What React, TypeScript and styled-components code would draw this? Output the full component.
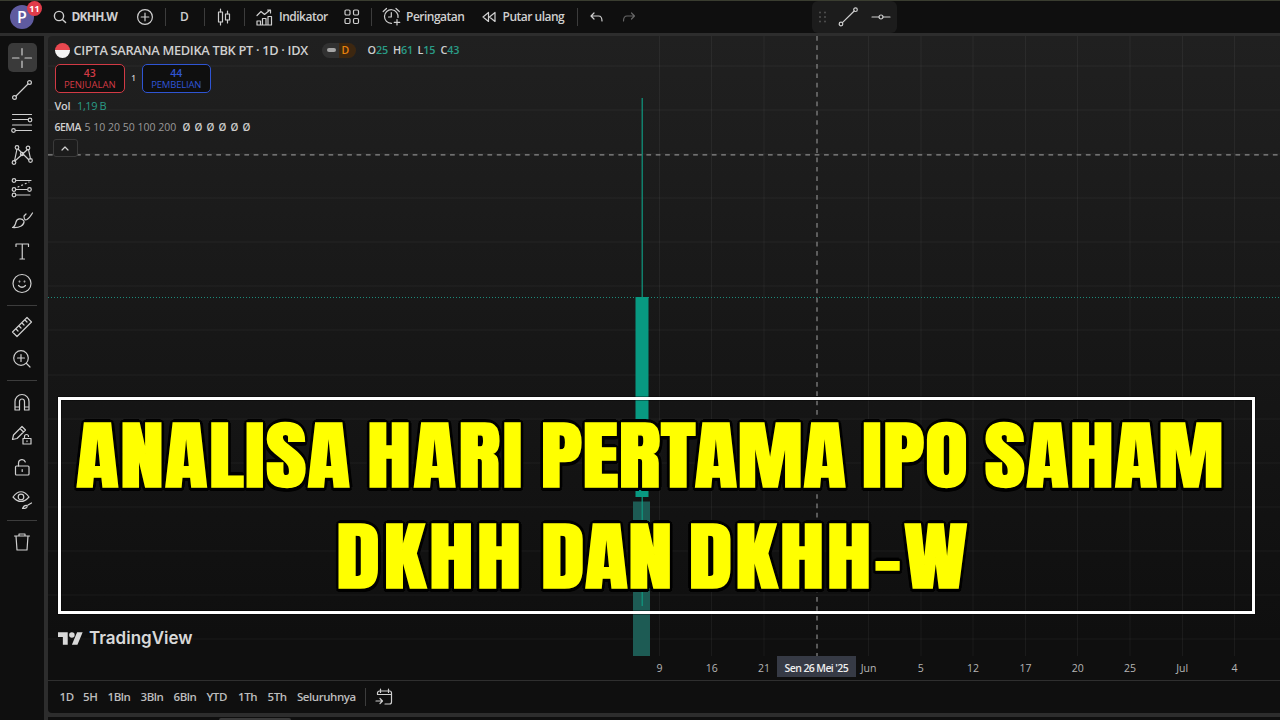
import React from 'react';
import styled, { createGlobalStyle } from 'styled-components';

const Global = createGlobalStyle`
  * { box-sizing: border-box; }
  html, body { margin: 0; background: #0f0f0f; overflow: hidden; }
  body { font-family: "Open Sans", "Noto Sans", sans-serif; color: #cfcfcf; }
`;

const Page = styled.div`
  position: relative;
  width: 1280px;
  height: 720px;
  display: grid;
  grid-template-rows: 33px 1fr;
  row-gap: 3px;
  background: #2d2d2d;
  overflow: hidden;
`;

const TopBar = styled.header`
  display: flex;
  align-items: center;
  background: #0f0f0f;
  border-top: 1px solid #3a3d30;
`;

const Slot = styled.div<{ $w: number; $center?: boolean }>`
  flex: none;
  width: ${(p) => p.$w}px;
  display: flex;
  align-items: center;
  justify-content: ${(p) => (p.$center ? 'center' : 'flex-start')};
  svg { flex: none; display: block; }
`;

const Label = styled.span<{ $size?: number; $weight?: number; $color?: string; $ls?: number }>`
  font-size: ${(p) => p.$size ?? 12}px;
  font-weight: ${(p) => p.$weight ?? 600};
  letter-spacing: ${(p) => p.$ls ?? 0}px;
  color: ${(p) => p.$color ?? '#cfcfcf'};
  line-height: 16px;
  white-space: nowrap;
`;

const Divider = styled.i`
  flex: none;
  width: 1px;
  height: 18px;
  background: #3c3c3c;
`;

const Avatar = styled.div`
  position: relative;
  margin-left: 10px;
  width: 24px;
  height: 24px;
  border-radius: 50%;
  background: #5f5b9f;
  color: #fff;
  font-size: 16px;
  font-weight: 600;
  line-height: 24px;
  text-align: center;
`;

const Badge = styled.span`
  position: absolute;
  left: 17px;
  top: -4px;
  width: 15px;
  height: 15px;
  border-radius: 50%;
  background: #e03c4a;
  font-size: 9px;
  line-height: 15px;
  font-weight: 700;
`;

const Drawer = styled.div`
  display: flex;
  align-items: center;
  width: 85px;
  height: 32px;
  border-radius: 6px;
  background: #1c1c1c;
  padding-left: 6px;
`;

const Body = styled.div`
  display: grid;
  grid-template-columns: 44px 1fr;
  column-gap: 4px;
  min-height: 0;
`;

const Tools = styled.nav`
  display: flex;
  flex-direction: column;
  align-items: center;
  background: #0f0f0f;
  padding-top: 7px;
`;

const Tool = styled.div<{ $h: number; $active?: boolean }>`
  flex: none;
  width: 29px;
  height: ${(p) => p.$h}px;
  display: grid;
  place-items: center;
  border-radius: 5px;
  background: ${(p) => (p.$active ? '#3a3a3a' : 'transparent')};
  svg { display: block; overflow: visible; }
`;

const ToolRule = styled.i`
  flex: none;
  width: 30px;
  height: 1px;
  margin: 5px 0;
  background: #3c3c3c;
`;

const Main = styled.main`
  display: grid;
  grid-template-rows: 677px 3px;
  row-gap: 4px;
  min-width: 0;
`;

const ChartPanel = styled.section`
  position: relative;
  display: flex;
  flex-direction: column;
  border-radius: 4px 0 0 4px;
  background: linear-gradient(#202020 0, #1d1d1d 110px, #171717 300px, #121212 480px, #0f0f0f 600px);
`;

const Plot = styled.div`
  position: relative;
  height: 620px;
`;

const PlotSvg = styled.svg`
  position: absolute;
  inset: 0;
`;

const Legend = styled.div`
  position: relative;
  display: flex;
  flex-direction: column;
  align-items: flex-start;
  padding: 5px 0 0 6.5px;
`;

const LegendRow = styled.div<{ $h: number }>`
  display: flex;
  align-items: center;
  height: ${(p) => p.$h}px;
`;

const Flag = styled.i`
  width: 15px;
  height: 15px;
  margin-right: 4px;
  border-radius: 50%;
  background: linear-gradient(#e8474f 50%, #f4f4f4 50%);
`;

const Pill = styled.span`
  display: flex;
  align-items: center;
  width: 34px;
  height: 15px;
  border-radius: 8px;
  overflow: hidden;
  background: linear-gradient(90deg, #313131 50%, #3d2710 50%);
  i { width: 9px; height: 4px; margin: 0 6px 0 5px; border-radius: 2px; background: #a5a5a5; }
`;

const Trade = styled.div<{ $color: string; $w: number }>`
  display: flex;
  flex-direction: column;
  align-items: center;
  width: ${(p) => p.$w}px;
  height: 29px;
  padding-top: 2px;
  border: 1px solid ${(p) => p.$color};
  border-radius: 5px;
  background: #0f0f0f;
  span { line-height: 12px; color: ${(p) => p.$color}; }
`;

const Collapse = styled.div`
  display: grid;
  place-items: center;
  width: 25px;
  height: 18px;
  margin: 1px 0 0 -2px;
  border: 1px solid #3a3a3a;
  border-radius: 3px;
  background: #1c1c1c;
`;

const Brand = styled.div`
  position: absolute;
  left: 10px;
  top: 590px;
  display: flex;
  align-items: center;
  gap: 6px;
  height: 24px;
  font-family: Inter, sans-serif;
  font-size: 17px;
  font-weight: 600;
  color: #d9d9d9;
`;

const TimeAxis = styled.div`
  display: flex;
  height: 24px;
  padding-left: 585.4px;
`;

const Tick = styled.div`
  flex: none;
  display: flex;
  justify-content: center;
  align-items: center;
  width: 52.27px;
  height: 24px;
`;

const TickTag = styled.div`
  flex: none;
  display: flex;
  align-items: center;
  justify-content: center;
  width: 79px;
  height: 21px;
  margin-top: -3px;
  padding-top: 2px;
  background: #363a45;
`;

const Ranges = styled.footer`
  display: flex;
  align-items: center;
  height: 33px;
  border-top: 1px solid #2f2f2f;
  padding-left: 11.5px;
`;

const LowerPanel = styled.div`
  display: flex;
  align-items: flex-end;
  background: #0f0f0f;
  padding-left: 171px;
  i { width: 72px; height: 2px; border-radius: 2px 2px 0 0; background: #3a3a3a; }
`;

const Banner = styled.div`
  position: absolute;
  left: 58px;
  top: 397px;
  width: 1197px;
  height: 217px;
  display: flex;
  flex-direction: column;
  align-items: center;
  padding-top: 6px;
  border: 3px solid #fff;
  box-shadow: 0 0 0 1px rgba(0, 0, 0, 0.35), inset 0 0 0 1px rgba(0, 0, 0, 0.35);
`;

const Headline = styled.div<{ $mr: number; $sx: number }>`
  height: 101px;
  margin-right: ${(p) => p.$mr}px;
  line-height: 100px;
  font-family: Impact, Anton, "Roboto Condensed", Roboto, sans-serif;
  font-size: 74px;
  font-weight: 400;
  word-spacing: -4px;
  white-space: nowrap;
  color: #ffff00;
  transform: scaleX(${(p) => p.$sx});
  -webkit-text-stroke: 1.4px #ffff00;
  text-shadow: 3px 0 #000, -3px 0 #000, 0 4px #000, 0 -4px #000, 2.5px 2.5px #000, -2.5px 2.5px #000,
    2.5px -2.5px #000, -2.5px -2.5px #000, 1.5px 3.5px #000, -1.5px 3.5px #000,
    1.5px -3.5px #000, -1.5px -3.5px #000;
`;

const Word = styled.span<{ $ls: number }>`
  letter-spacing: ${(p) => p.$ls}px;
`;

const S = ({ w = 22, h = 22, children, c = '#cfcfcf', sw = 1.2 }: any) => (
  <svg width={w} height={h} viewBox={`0 0 ${w} ${h}`} fill="none" stroke={c} strokeWidth={sw} strokeLinecap="round" strokeLinejoin="round">
    {children}
  </svg>
);

const xs = [659.5, 711.5, 764, 868.5, 921, 973, 1025.5, 1077.5, 1130, 1182.5, 1234.5];
const ys = [66, 110, 154, 198, 242, 286, 330, 375, 419, 463, 507, 551, 595, 639];
const ticks = ['9', '16', '21', '*', 'Jun', '5', '12', '17', '20', '25', 'Jul', '4'];
const ranges: [string, number][] = [['1D', 23.5], ['5H', 24.5], ['1Bln', 33], ['3Bln', 33], ['6Bln', 33], ['YTD', 31.5], ['1Th', 29.5], ['5Th', 29.5], ['Seluruhnya', 67.5]];

export default function App() {
  return (
    <Page>
      <Global />
      <TopBar>
        <Slot $w={53}><Avatar>P<Badge>11</Badge></Avatar></Slot>
        <Slot $w={18.5}><S w={14} h={14} sw={1.4}><circle cx="6" cy="6" r="4.6" /><path d="M9.4 9.4 12.6 12.6" /></S></Slot>
        <Slot $w={65}><Label $ls={-0.8} $weight={700}>DKHH.W</Label></Slot>
        <Slot $w={28}><S w={16} h={16}><circle cx="8" cy="8" r="7.4" /><path d="M8 4.2v7.6M4.2 8h7.6" /></S></Slot>
        <Divider />
        <Slot $w={38} $center><Label>D</Label></Slot>
        <Divider />
        <Slot $w={39} $center><S w={14} h={18}><path d="M3.5 1v3M3.5 14v3M10.5 3v3M10.5 12v3" /><rect x="1.5" y="4" width="4" height="10" /><rect x="8.5" y="6" width="4" height="6" /></S></Slot>
        <Divider />
        <Slot $w={34.5}><Slot $w={11.5} /><S w={17} h={17}><path d="M1 6.5 5 2.5 8.5 5.5 14 1M11.5 1H14.5V4M1 16v-4h3.5v4M6.5 16V9.5H10V16M12 16V7.5h3.5V16M1 16h14.5" /></S></Slot>
        <Slot $w={64.5}><Label $ls={-0.5}>Indikator</Label></Slot>
        <Slot $w={27}><S w={16} h={16}><rect x="1" y="1" width="5" height="5" rx="1.2" /><rect x="9.5" y="1" width="5" height="5" rx="1.2" /><rect x="1" y="9.5" width="5" height="5" rx="1.2" /><rect x="9.5" y="9.5" width="5" height="5" rx="1.2" /></S></Slot>
        <Divider />
        <Slot $w={34.5}><Slot $w={10} /><S w={20} h={20}><path d="M16 10.5A6.8 6.8 0 1 0 9.5 16.3M9.3 5.5V10H6.5M1.2 4.5 4.5 1.5M14 1.5l3.3 3M15 12.5v5.5M12.2 15.3h5.6" /></S></Slot>
        <Slot $w={75.5}><Label $ls={-0.5}>Peringatan</Label></Slot>
        <Slot $w={21}><S w={15} h={12}><path d="M6.5 1.5v9L1 6zM13 1.5v9L7.5 6z" /></S></Slot>
        <Slot $w={74}><Label $ls={-0.5}>Putar ulang</Label></Slot>
        <Divider />
        <Slot $w={44}><Slot $w={12} /><S w={14} h={10}><path d="M4 1 1 4 4 7M1 4h7.5Q12 4 12 9" /></S></Slot>
        <Slot $w={190}><S w={14} h={10} c="#666"><path d="M9.5 1l3 3-3 3M12.5 4H5Q1.5 4 1.5 9" /></S></Slot>
        <Drawer>
          <Slot $w={20}><S w={9} h={12} c="none"><g fill="#555"><circle cx="2" cy="1.5" r=".9" /><circle cx="7" cy="1.5" r=".9" /><circle cx="2" cy="6" r=".9" /><circle cx="7" cy="6" r=".9" /><circle cx="2" cy="10.5" r=".9" /><circle cx="7" cy="10.5" r=".9" /></g></S></Slot>
          <Slot $w={33}><S w={20} h={20}><circle cx="3" cy="17" r="1.8" /><circle cx="17.5" cy="2.7" r="1.8" /><path d="M4.4 15.6 16.2 4" /></S></Slot>
          <S w={20} h={10}><circle cx="10" cy="5" r="2" /><path d="M1 5h7M12 5h7" /></S>
        </Drawer>
      </TopBar>
      <Body>
        <Tools>
          <Tool $h={29} $active><S><path d="M11 1.5v6.5M11 14v6.5M1.5 11h6.5M14 11h6.5" /></S></Tool>
          <Tool $h={36}><S><circle cx="3.5" cy="18.5" r="1.9" /><circle cx="18.5" cy="3.5" r="1.9" /><path d="M5 17 17 5" /></S></Tool>
          <Tool $h={29}><S><path d="M1.5 2.5h19M1.5 7.5h15.5M4.5 18.5h16M1.5 13h19" /><circle cx="19" cy="8" r="1.8" /><circle cx="2.5" cy="18.5" r="1.8" /></S></Tool>
          <Tool $h={35}><S><path d="M3.5 17 6 5M7.5 5.5l10 10M16.5 5.5 4.5 16.5M17.5 5.5l2 9.5" /><circle cx="6" cy="3.5" r="1.8" /><circle cx="17" cy="4" r="1.8" /><circle cx="3" cy="18.5" r="1.8" /><circle cx="19.5" cy="16.5" r="1.8" /><circle cx="11" cy="10" r="1.6" /></S></Tool>
          <Tool $h={31}><S><path d="M5 3.5h15M5 12.5h11M5 18h14" /><path d="M7 10 18 5" strokeDasharray="1 3" /><circle cx="3" cy="3.5" r="1.8" /><circle cx="3" cy="12.5" r="1.8" /><circle cx="18.5" cy="12.5" r="1.8" /><circle cx="3" cy="18" r="1.8" /></S></Tool>
          <Tool $h={33}><S><path d="M1.5 18.5Q4 17.5 5 13C6 9 11 9 13 12C13.5 16 9 19 1.5 18.5ZM13 7Q13 12 16 10.5Q18.5 9 21.5 4M13 7 15 5" /></S></Tool>
          <Tool $h={31}><S><path d="M5 5.5V3H17.5V5.5M11.25 3V18M9 18h4.5" /></S></Tool>
          <Tool $h={33}><S><circle cx="11" cy="10.5" r="9" /><path d="M7.5 12.5Q11 16 14.5 12.5" /><circle cx="8.5" cy="8.5" r=".3" /><circle cx="13.5" cy="8.5" r=".3" /></S></Tool>
          <ToolRule />
          <Tool $h={31}><S><path d="M1.5 16 16 1.5 20.5 6 6 20.5ZM5 13l2 2M8 10l2 2M11 7l2 2M14 4l2 2" /></S></Tool>
          <Tool $h={33}><S><circle cx="10" cy="10" r="7.3" /><path d="M10 6.5v7M6.5 10h7M15.5 15.5 19 19" /></S></Tool>
          <ToolRule />
          <Tool $h={32}><S><path d="M4 19V10.5a7 7 0 0 1 14 0V19H13.5V10.5a2.5 2.5 0 0 0-5 0V19ZM4 16h4.5M13.5 16H18" /></S></Tool>
          <Tool $h={33}><S><path d="M1.5 15.5 2.5 11 11 2.5 14.5 6 6 14.5ZM9 4.5l3.5 3.5M12 14.5h8v5.5h-8zM13.5 14.5V12.5a2 2 0 0 1 4 0M16 16.8v.8" /></S></Tool>
          <Tool $h={33}><S><rect x="4.5" y="9" width="13.5" height="9" rx="1" /><path d="M7.5 9V6a3.5 3.5 0 0 1 6.8-1M11.2 12.5v2" /></S></Tool>
          <Tool $h={31}><S><path d="M2 8Q10 -2.5 18 8Q10 17 2 8Z" /><circle cx="10" cy="8" r="2.8" /><path d="M11.5 19.5Q13 16 16 16.5Q17 19.5 11.5 19.5ZM17 16 20.5 14" /></S></Tool>
          <ToolRule />
          <Tool $h={31}><S><path d="M3.5 5h15M8 5V3h6v2M5 5 6 19H16L17 5" /></S></Tool>
        </Tools>
        <Main>
          <ChartPanel>
            <Plot>
              <PlotSvg width="1232" height="620" viewBox="48 36 1232 620">
                <g stroke="#fff" strokeOpacity=".05">
                  {ys.map((y) => <path key={y} d={`M48 ${y}H1280`} />)}
                  {xs.map((x) => <path key={x} d={`M${x} 36V656`} />)}
                </g>
                <path d="M48 297.5H1280" stroke="#1d8a7a" strokeDasharray="1 2" />
                <rect x="633" y="501.5" width="17" height="155" fill="#1d5b54" />
                <path d="M642.2 98V606" stroke="#0f9a82" strokeWidth="1.2" />
                <rect x="635.5" y="297" width="13" height="200" fill="#089981" />
                <path d="M48 154.8H1280" stroke="#8a8a8a" strokeWidth="1.2" strokeDasharray="4.7 4.65" />
                <path d="M817 36V656" stroke="#8a8a8a" strokeWidth="1.2" strokeDasharray="4.7 4.65" />
              </PlotSvg>
              <Legend>
                <LegendRow $h={18}>
                  <Flag />
                  <Slot $w={248}><Label $size={12.8} $weight={600} $ls={-0.3}>CIPTA SARANA MEDIKA TBK PT · 1D · IDX</Label></Slot>
                  <Pill><i /><Label $size={10.5} $color="#e8820c">D</Label></Pill>
                  <Slot $w={12} />
                  {([['O', '25', 25.5], ['H', '61', 24.5], ['L', '15', 23], ['C', '43', 22]] as const).map(([k, v, w]) => (
                    <Slot $w={w} key={k}><Label $size={10.8} $ls={-0.1}>{k}</Label><Label $size={10.8} $ls={-0.2} $color="#2a9c87">{v}</Label></Slot>
                  ))}
                </LegendRow>
                <LegendRow $h={38}>
                  <Trade $color="#d23a45" $w={70.5}><Label $size={10.5}>43</Label><Label $size={9.5} $weight={500}>PENJUALAN</Label></Trade>
                  <Slot $w={17} $center><Label $size={8}>1</Label></Slot>
                  <Trade $color="#2f55d4" $w={68.5}><Label $size={10.5}>44</Label><Label $size={9.5} $weight={500} $ls={-0.2}>PEMBELIAN</Label></Trade>
                </LegendRow>
                <LegendRow $h={18}>
                  <Slot $w={22.5}><Label $size={11} $ls={-0.3}>Vol</Label></Slot><Label $size={11} $weight={500} $color="#2a9c87" $ls={-0.4}>1,19 B</Label>
                </LegendRow>
                <LegendRow $h={23}>
                  <Slot $w={30}><Label $size={10.5} $ls={-0.5}>6EMA</Label></Slot>
                  <Slot $w={98}><Label $size={10.5} $weight={400} $color="#9a9a9a">5 10 20 50 100 200</Label></Slot>
                  {[0, 1, 2, 3, 4, 5].map((i) => <Slot $w={12} key={i}><Label $size={10}>Ø</Label></Slot>)}
                </LegendRow>
                <Collapse><S w={8} h={5}><path d="M1 4 4 1 7 4" /></S></Collapse>
              </Legend>
              <Brand>
                <svg width="25" height="13" viewBox="0 4 36 18" fill="#d9d9d9"><path d="M14 22H7V11H0V4h14v18zM28 22h-8l7.5-18h8L28 22z" /><circle cx="20" cy="8" r="4" /></svg>
                TradingView
              </Brand>
            </Plot>
            <TimeAxis>
              {ticks.map((t) => (
                <Tick key={t}>
                  {t === '*' ? <TickTag><Label $size={10.5} $color="#eee" $ls={-0.6}>Sen 26 Mei '25</Label></TickTag> : <Label $size={10.5} $weight={500} $color="#b5b5b5">{t}</Label>}
                </Tick>
              ))}
            </TimeAxis>
            <Ranges>
              {ranges.map(([t, w]) => <Slot $w={w} key={t}><Label $size={11.5} $color="#bdbdbd" $ls={-0.45}>{t}</Label></Slot>)}
              <Divider />
              <Slot $w={9.5} />
              <S w={18} h={18}><path d="M2.5 6.5V5a2 2 0 0 1 2-2H14.5a2 2 0 0 1 2 2V14a2 2 0 0 1-2 2H10M2.5 6.5h14M5.5 1v3.5M13.5 1v3.5M1 13h6M5 10.5 7.5 13 5 15.5" /></S>
            </Ranges>
          </ChartPanel>
          <LowerPanel><i /></LowerPanel>
        </Main>
      </Body>
      <Banner>
        <Headline $mr={12} $sx={1.193}>
          <Word $ls={0.8}>ANALISA</Word> <Word $ls={1.8}>HARI</Word> <Word $ls={0}>PERTAMA</Word> <Word $ls={0.6}>IPO</Word> <Word $ls={0.6}>SAHAM</Word>
        </Headline>
        <Headline $mr={6} $sx={1.205}>
          <Word $ls={2.8}>DKHH</Word> <Word $ls={0}>DAN</Word> <Word $ls={2.1}>DKHH-W</Word>
        </Headline>
      </Banner>
    </Page>
  );
}
